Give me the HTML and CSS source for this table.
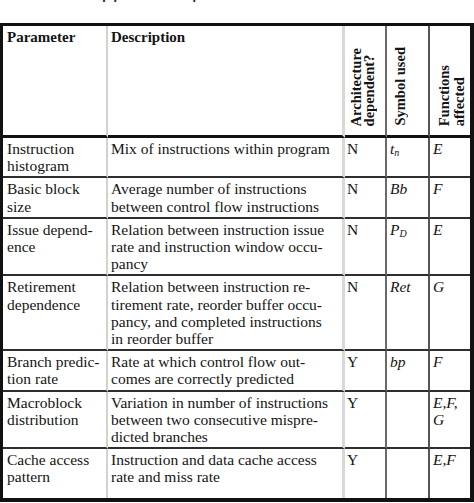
FILE: index.html
```html
<!DOCTYPE html>
<html>
<head>
<meta charset="utf-8">
<link rel="stylesheet" href="styles.css">
</head>
<body>
<div class="cap"><div class="cap-text">Table 1. Application parameters and their effects</div></div>
<div class="tbl">
  <div class="c c1 h">Parameter</div>
  <div class="c c2 h">Description</div>
  <div class="c c3 h hr"><div class="rot rot3">Architecture<br>dependent?</div></div>
  <div class="c c4 h hr"><div class="rot rot4">Symbol used</div></div>
  <div class="c c5 h hr"><div class="rot rot5">Functions<br>affected</div></div>

  <div class="c c1">Instruction<br>histogram</div>
  <div class="c c2">Mix of instructions within program</div>
  <div class="c c3">N</div>
  <div class="c c4 sym">t<sub>n</sub></div>
  <div class="c c5 fn">E</div>

  <div class="c c1">Basic block<br>size</div>
  <div class="c c2">Average number of instructions<br>between control flow instructions</div>
  <div class="c c3">N</div>
  <div class="c c4 sym">Bb</div>
  <div class="c c5 fn">F</div>

  <div class="c c1">Issue depend-<br>ence</div>
  <div class="c c2">Relation between instruction issue<br>rate and instruction window occu-<br>pancy</div>
  <div class="c c3">N</div>
  <div class="c c4 sym">P<sub>D</sub></div>
  <div class="c c5 fn">E</div>

  <div class="c c1">Retirement<br>dependence</div>
  <div class="c c2">Relation between instruction re-<br>tirement rate, reorder buffer occu-<br>pancy, and completed instructions<br>in reorder buffer</div>
  <div class="c c3">N</div>
  <div class="c c4 sym">Ret</div>
  <div class="c c5 fn">G</div>

  <div class="c c1">Branch predic-<br>tion rate</div>
  <div class="c c2">Rate at which control flow out-<br>comes are correctly predicted</div>
  <div class="c c3">Y</div>
  <div class="c c4 sym">bp</div>
  <div class="c c5 fn">F</div>

  <div class="c c1">Macroblock<br>distribution</div>
  <div class="c c2">Variation in number of instructions<br>between two consecutive mispre-<br>dicted branches</div>
  <div class="c c3">Y</div>
  <div class="c c4 sym"></div>
  <div class="c c5 fn">E,F,<br>G</div>

  <div class="c c1 last">Cache access<br>pattern</div>
  <div class="c c2 last">Instruction and data cache access<br>rate and miss rate</div>
  <div class="c c3 last">Y</div>
  <div class="c c4 sym last"></div>
  <div class="c c5 fn last">E,F</div>
</div>
</body>
</html>
```

FILE: styles.css
```css
* { box-sizing: border-box; }
html, body { margin: 0; padding: 0; background: #fff; }
body {
  width: 474px;
  height: 503px;
  overflow: hidden;
  font-family: "Liberation Serif", "Times New Roman", serif;
  color: #141414;
}
.cap {
  height: 23px;
  overflow: hidden;
}
.cap-text {
  font-family: "Liberation Sans", Arial, sans-serif;
  font-size: 20px;
  line-height: 20px;
  margin-top: -19px;
  padding-left: 14px;
  white-space: nowrap;
  color: #222;
}
.tbl {
  width: 474px;
  display: grid;
  grid-template-columns: 105px 237px 42px 43px 40px;
  border-top: 3px solid #111;
  border-left: 3px solid #111;
  border-right: 4px solid #111;
  border-bottom: 4px solid #111;
}
.c {
  font-size: 15.5px;
  line-height: 17.2px;
  padding: 2px 2px 2px 3px;
  white-space: nowrap;
  border-bottom: 2px solid #2e2e2e;
}
.c1 { padding-left: 4px; border-right: 2px solid #d2d2d2; }
.c2 { padding-left: 3px; border-right: 3px solid #d8d8d8; }
.c3 { padding-left: 2px; border-right: 2px solid #6a6a6a; }
.c4 { padding-left: 3px; border-right: 2px solid #555; }
.c5 { padding-left: 3px; }
.last { border-bottom: none; padding-bottom: 12px; }
.h {
  height: 112px;
  font-weight: bold;
  font-size: 15px;
  padding-top: 3px;
  border-bottom: 3px solid #111;
}
.hr {
  display: flex;
  flex-direction: column;
  justify-content: flex-end;
  align-items: flex-start;
  padding-bottom: 9px;
}
.rot {
  writing-mode: vertical-rl;
  transform: rotate(180deg);
  font-size: 14.5px;
}
.rot3 { line-height: 13px; margin-left: 3px; }
.rot4 { line-height: 14px; margin-left: 3px; }
.rot5 { line-height: 15px; margin-left: 4px; }
.sym, .fn { font-style: italic; }
.sym { padding-left: 3px; }
sub {
  font-size: 10px;
  vertical-align: -2px;
  line-height: 0;
}
```
